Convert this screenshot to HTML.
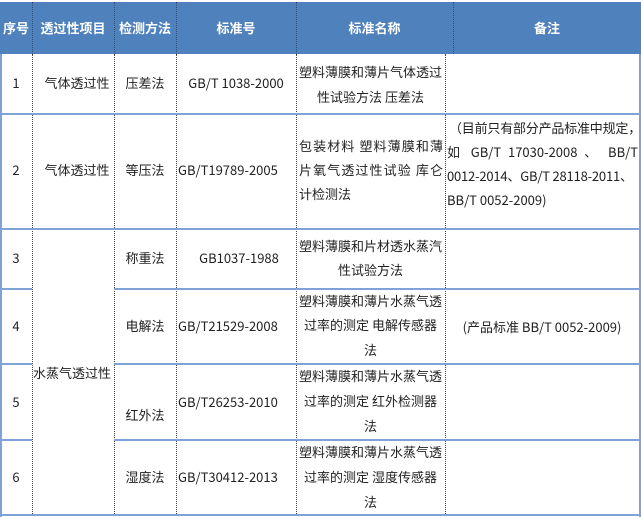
<!DOCTYPE html>
<html><head><meta charset="utf-8"><style>
*{margin:0;padding:0;box-sizing:border-box}
body{width:641px;height:517px;background:#fff;position:relative;overflow:hidden;font-family:"Noto Sans CJK SC","Liberation Sans",sans-serif;font-size:13px;color:#222}
.h{position:absolute;top:2px;height:52px;background:#4f81bd;left:0;width:641px}
.ht{position:absolute;top:19px;color:#fff;font-weight:bold;font-size:13px;line-height:18px;text-align:center}
.v{position:absolute;width:0;border-left:1px dotted #444}
.hl{position:absolute;height:0;border-top:2px solid #7fa3d6}
.t{position:absolute;line-height:18px;white-space:nowrap;text-align:center}
.j{position:absolute;line-height:18px;white-space:nowrap;text-align:justify;text-align-last:justify}
</style></head><body>
<div class="h"></div>
<div class="ht" style="left:0;width:32px">序号</div>
<div class="ht" style="left:32px;width:82px">透过性项目</div>
<div class="ht" style="left:114px;width:62px">检测方法</div>
<div class="ht" style="left:176px;width:120px">标准号</div>
<div class="ht" style="left:296px;width:157px">标准名称</div>
<div class="ht" style="left:453px;width:188px">备注</div>
<div class="v" style="left:32px;top:2px;height:52px;border-color:#2d4f7a"></div>
<div class="v" style="left:114px;top:2px;height:52px;border-color:#2d4f7a"></div>
<div class="v" style="left:176px;top:2px;height:52px;border-color:#2d4f7a"></div>
<div class="v" style="left:296px;top:2px;height:52px;border-color:#2d4f7a"></div>
<div class="v" style="left:453px;top:2px;height:52px;border-color:#2d4f7a"></div>
<div class="v" style="left:32px;top:54px;height:462px"></div>
<div class="v" style="left:114px;top:54px;height:462px"></div>
<div class="v" style="left:176px;top:54px;height:462px"></div>
<div class="v" style="left:296px;top:54px;height:462px"></div>
<div class="v" style="left:445px;top:54px;height:462px"></div>
<div style="position:absolute;left:0;top:54px;width:2px;height:463px;background:#7fa3d6"></div>
<div style="position:absolute;left:639px;top:54px;width:2px;height:463px;background:#7fa3d6"></div>
<div class="hl" style="left:0;width:641px;top:113px"></div>
<div class="hl" style="left:0;width:641px;top:228px"></div>
<div class="hl" style="left:0;width:32px;top:288px"></div>
<div class="hl" style="left:114px;width:527px;top:288px"></div>
<div class="hl" style="left:0;width:32px;top:363px"></div>
<div class="hl" style="left:114px;width:527px;top:363px"></div>
<div class="hl" style="left:0;width:32px;top:439px"></div>
<div class="hl" style="left:114px;width:527px;top:439px"></div>
<div class="hl" style="left:0;width:641px;top:514px"></div>
<div class="t" style="left:0;width:32px;top:74px">1</div>
<div class="t" style="left:0;width:32px;top:161px">2</div>
<div class="t" style="left:0;width:32px;top:249px">3</div>
<div class="t" style="left:0;width:32px;top:317px">4</div>
<div class="t" style="left:0;width:32px;top:393px">5</div>
<div class="t" style="left:0;width:32px;top:468px">6</div>
<div class="t" style="left:32px;width:82px;top:74px;padding-left:8px">气体透过性</div>
<div class="t" style="left:32px;width:82px;top:161px;padding-left:8px">气体透过性</div>
<div class="t" style="left:33px;top:144px;display:none"></div>
<div class="t" style="left:33px;top:364px;text-align:left">水蒸气透过性</div>
<div class="t" style="left:114px;width:62px;top:74px">压差法</div>
<div class="t" style="left:114px;width:62px;top:161px">等压法</div>
<div class="t" style="left:114px;width:62px;top:249px">称重法</div>
<div class="t" style="left:114px;width:62px;top:317px">电解法</div>
<div class="t" style="left:114px;width:62px;top:406px">红外法</div>
<div class="t" style="left:114px;width:62px;top:468px">湿度法</div>
<div class="t" style="left:176px;width:120px;top:74px">GB/T 1038-2000</div>
<div class="t" style="left:178px;top:161px;text-align:left">GB/T19789-2005</div>
<div class="t" style="left:176px;width:120px;top:249px;padding-left:6px">GB1037-1988</div>
<div class="t" style="left:178px;top:317px;text-align:left">GB/T21529-2008</div>
<div class="t" style="left:178px;top:393px;text-align:left">GB/T26253-2010</div>
<div class="t" style="left:178px;top:468px;text-align:left">GB/T30412-2013</div>
<div class="t" style="left:296px;width:149px;top:63px">塑料薄膜和薄片气体透过</div>
<div class="t" style="left:296px;width:149px;top:88px">性试验方法 压差法</div>
<div class="j" style="left:299px;width:144px;top:137px">包装材料 塑料薄膜和薄</div>
<div class="j" style="left:299px;width:144px;top:161px">片氧气透过性试验 库仑</div>
<div class="t" style="left:299px;top:185px;text-align:left">计检测法</div>
<div class="t" style="left:296px;width:149px;top:237px">塑料薄膜和片材透水蒸汽</div>
<div class="t" style="left:296px;width:149px;top:261px">性试验方法</div>
<div class="t" style="left:296px;width:149px;top:292px">塑料薄膜和薄片水蒸气透</div>
<div class="t" style="left:296px;width:149px;top:316px">过率的测定 电解传感器</div>
<div class="t" style="left:296px;width:149px;top:341px">法</div>
<div class="t" style="left:296px;width:149px;top:367px">塑料薄膜和薄片水蒸气透</div>
<div class="t" style="left:296px;width:149px;top:392px">过率的测定 红外检测器</div>
<div class="t" style="left:296px;width:149px;top:417px">法</div>
<div class="t" style="left:296px;width:149px;top:443px">塑料薄膜和薄片水蒸气透</div>
<div class="t" style="left:296px;width:149px;top:468px">过率的测定 湿度传感器</div>
<div class="t" style="left:296px;width:149px;top:493px">法</div>
<div class="t" style="left:449px;top:119px;text-align:left;letter-spacing:-0.2px">（目前只有部分产品标准中规定，</div>
<div class="j" style="left:447px;width:191px;top:143px">如 GB/T 17030-2008 、 BB/T</div>
<div class="t" style="left:447px;top:167px;text-align:left;letter-spacing:-0.2px">0012-2014、GB/T 28118-2011、</div>
<div class="t" style="left:447px;top:191px;text-align:left">BB/T 0052-2009)</div>
<div class="t" style="left:445px;width:194px;top:318px">(产品标准 BB/T 0052-2009)</div>
</body></html>
